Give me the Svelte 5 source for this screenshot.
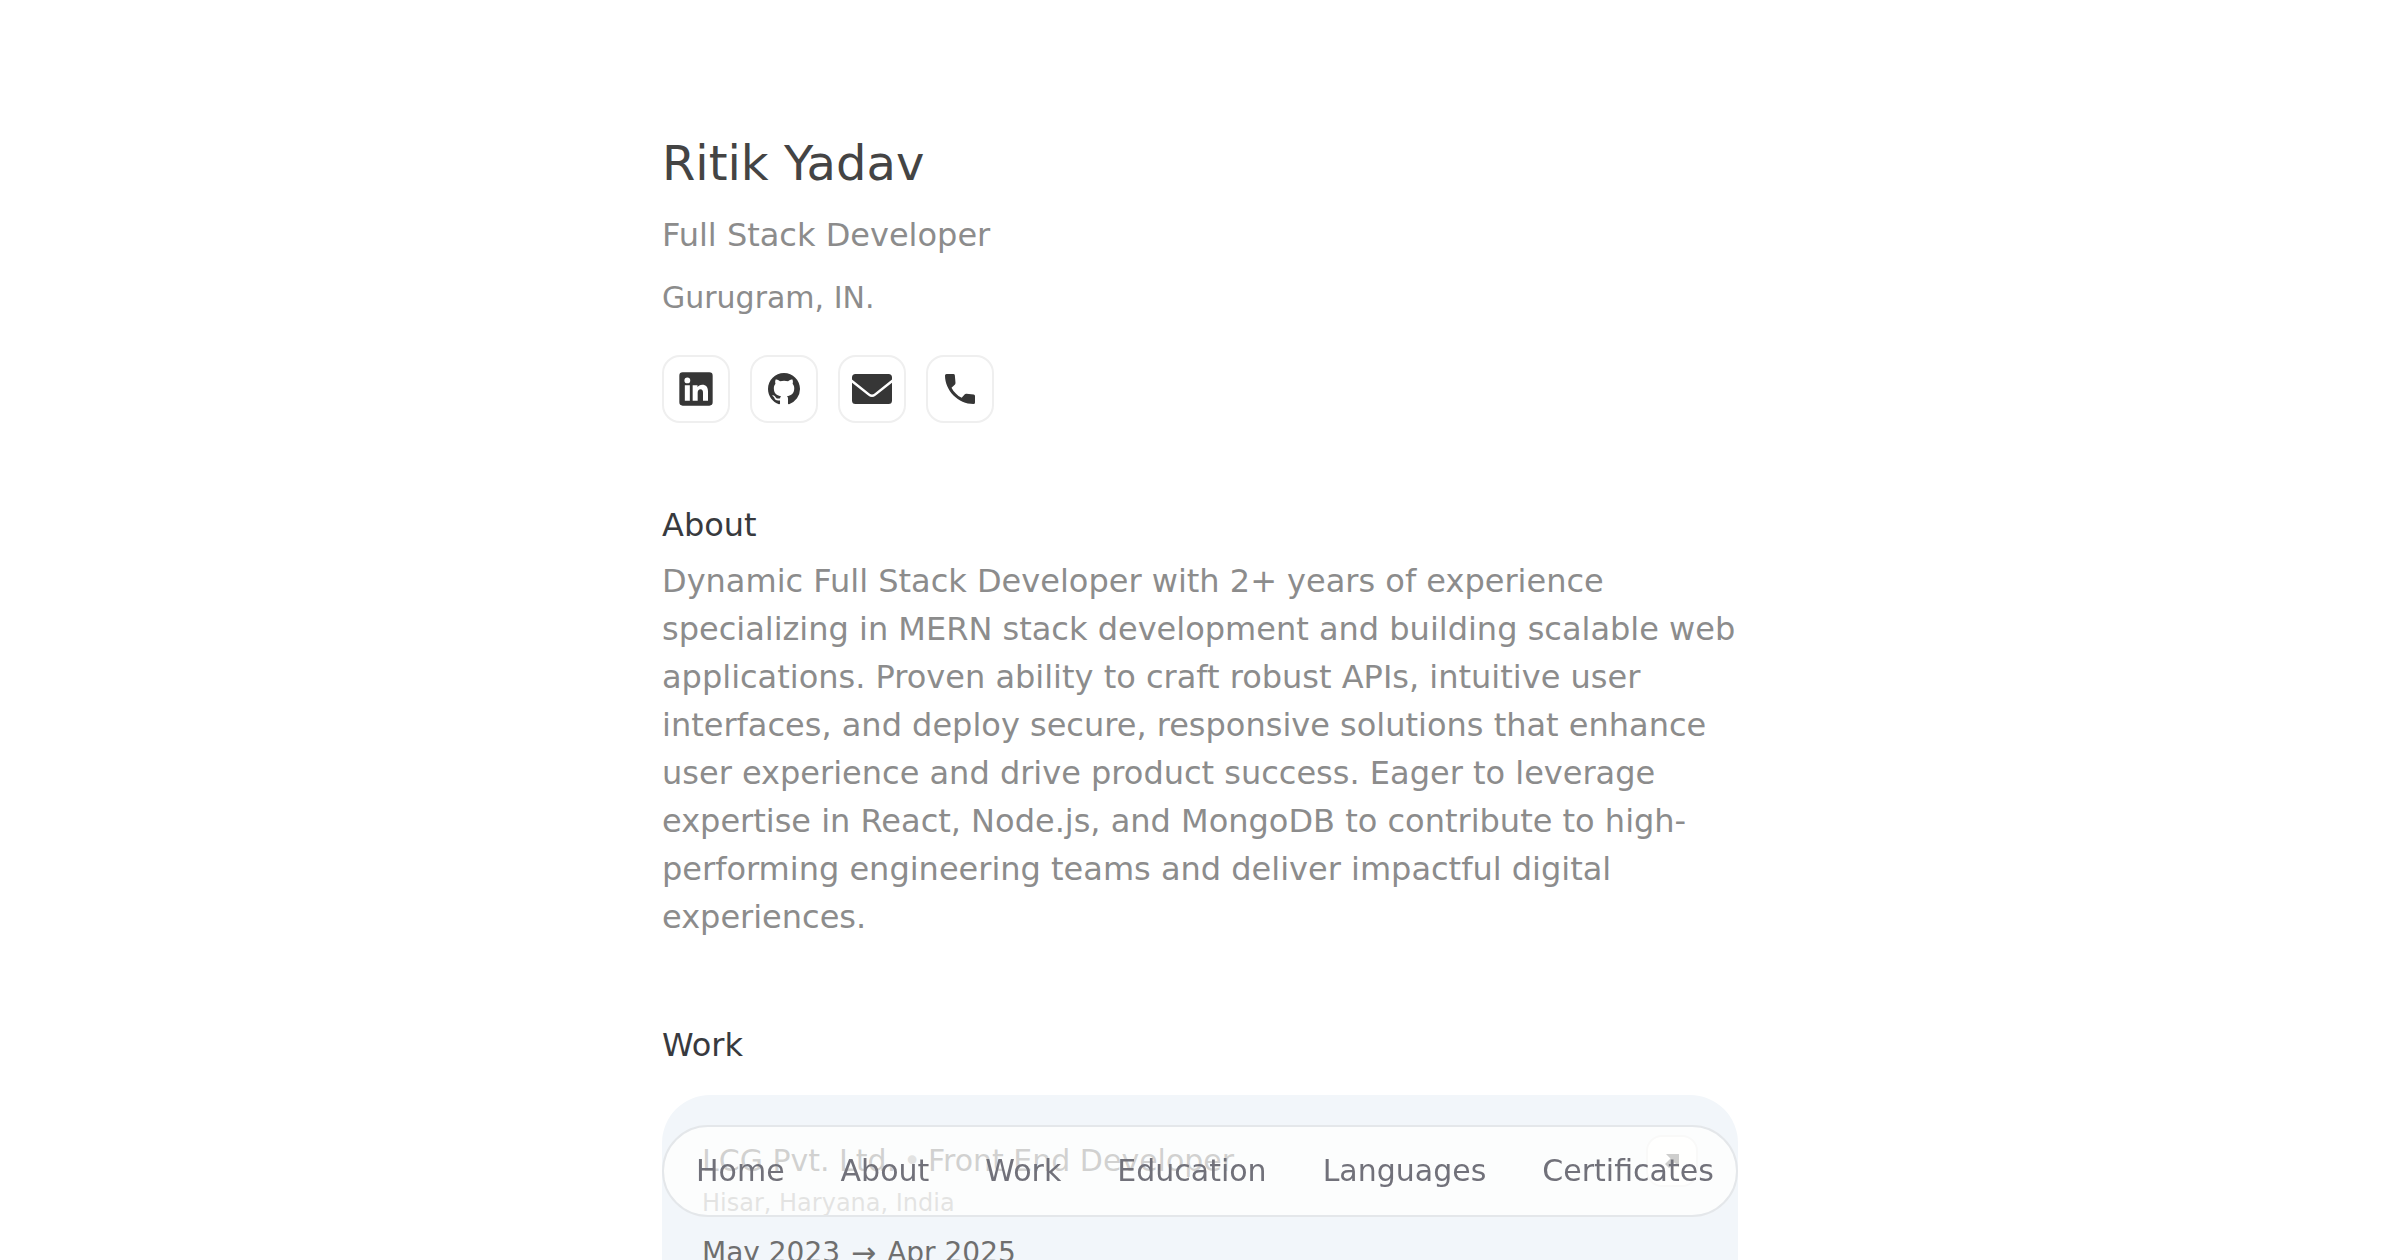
<script lang="ts">
    const socials = [
        {
            name: "LinkedIn",
            href: "#linkedin",
            size: 40,
            viewBox: "0 0 24 24",
            path: "M20 2H4a2 2 0 0 0-2 2v16a2 2 0 0 0 2 2h16a2 2 0 0 0 2-2V4a2 2 0 0 0-2-2zM8.300 19H5.300V9.700h3zM6.800 8.600a1.750 1.750 0 1 1 0-3.500 1.750 1.750 0 0 1 0 3.500zM19.200 19h-3v-4.700c0-1.300-.4-2.100-1.500-2.100s-1.700.8-1.700 2.100V19h-3V9.700h2.900v1.200c.5-.9 1.500-1.450 2.800-1.450 2.400 0 3.500 1.500 3.500 4.150z",
        },
        {
            name: "GitHub",
            href: "#github",
            size: 32,
            viewBox: "0 0 16 16",
            path: "M8 0C3.580 0 0 3.580 0 8c0 3.540 2.290 6.530 5.470 7.590.4.070.55-.17.55-.38 0-.19-.01-.82-.01-1.490-2.010.37-2.530-.49-2.690-.94-.09-.23-.48-.94-.82-1.130-.28-.15-.68-.52-.01-.53.63-.01 1.080.58 1.230.82.72 1.210 1.870.87 2.330.66.07-.52.28-.87.51-1.070-1.780-.2-3.640-.89-3.640-3.950 0-.87.31-1.590.82-2.150-.08-.2-.36-1.020.08-2.120 0 0 .67-.21 2.200.82.64-.18 1.320-.27 2-.27s1.360.09 2 .27c1.530-1.040 2.200-.82 2.200-.82.44 1.100.16 1.920.08 2.120.51.56.82 1.270.82 2.150 0 3.070-1.870 3.750-3.650 3.950.29.25.54.73.54 1.480 0 1.070-.01 1.930-.01 2.200 0 .21.15.46.55.38A8.010 8.010 0 0 0 16 8c0-4.420-3.580-8-8-8z",
        },
        {
            name: "Email",
            href: "#email",
            size: 40,
            viewBox: "0 0 40 40",
            path: "M3.500 5h33A3.500 3.500 0 0 1 40 8.500v2L22.500 24.500a4 4 0 0 1-5 0L0 10.500v-2A3.500 3.500 0 0 1 3.500 5zM0 13.700l16.200 12.800a6 6 0 0 0 7.600 0L40 13.700v17.800a3.500 3.500 0 0 1-3.500 3.500h-33A3.500 3.500 0 0 1 0 31.500z",
        },
        {
            name: "Phone",
            href: "#phone",
            size: 40,
            viewBox: "0 0 24 24",
            path: "M3.900 3H8a.9.900 0 0 1 .9.800l.4 4.500c0 .4-.1.700-.3 1l-2.100 1.900c1.500 2.700 3.400 4.600 6.100 6.100l1.900-2.100c.3-.3.6-.4 1-.3l4.300.4a.9.900 0 0 1 .8.900v3.900a.9.900 0 0 1-.9.900C11 21 3 13 3 3.900a.9.900 0 0 1 .9-.9z",
        },
    ];

    const links = ["Home", "About", "Work", "Education", "Languages", "Certificates"];
</script>

<main>
    <header id="home">
        <h1>Ritik Yadav</h1>
        <p class="role">Full Stack Developer</p>
        <p class="place">Gurugram, IN.</p>
        <div class="socials">
            {#each socials as social}
                <a class="social" href={social.href} aria-label={social.name}>
                    <svg width={social.size} height={social.size} viewBox={social.viewBox}>
                        <path d={social.path} />
                    </svg>
                </a>
            {/each}
        </div>
    </header>

    <section id="about">
        <h2>About</h2>
        <p class="summary">
            Dynamic Full Stack Developer with 2+ years of experience specializing in MERN stack
            development and building scalable web applications. Proven ability to craft robust
            APIs, intuitive user interfaces, and deploy secure, responsive solutions that enhance
            user experience and drive product success. Eager to leverage expertise in React,
            Node.js, and MongoDB to contribute to high-performing engineering teams and deliver
            impactful digital experiences.
        </p>
    </section>

    <section id="work">
        <h2>Work</h2>
        <article class="card">
            <div class="card-head">
                <h3>
                    <span>LCG Pvt. Ltd.</span>
                    <span class="dot">•</span>
                    <span>Front End Developer</span>
                </h3>
                <a class="open" href="#lcg" aria-label="Open LCG Pvt. Ltd.">
                    <svg width="14" height="14" viewBox="0 0 14 14">
                        <path d="M1 0h13v13l-4.500-4.500L4 14 0 10l5.500-5.500z" />
                    </svg>
                </a>
            </div>
            <p class="location">Hisar, Haryana, India</p>
            <p class="dates">
                <span>May 2023</span>
                <span class="arrow">→</span>
                <span>Apr 2025</span>
            </p>
        </article>
    </section>
</main>

<nav>
    {#each links as link}
        <a href="#{link.toLowerCase()}">{link}</a>
    {/each}
</nav>

<style>
    :global(body) {
        background: #fff;
        font-family: "DejaVu Sans", sans-serif;
    }

    :global(html) {
        scrollbar-width: none;
    }

    main {
        box-sizing: border-box;
        max-width: 1076px;
        margin: 0 auto;
        padding: 127px 0;
    }

    h1,
    h2,
    h3,
    p {
        margin: 0;
        font-weight: 400;
    }

    a {
        color: inherit;
        text-decoration: none;
    }

    svg {
        fill: currentColor;
    }

    h1 {
        color: #444;
        font-size: 48px;
        line-height: 72px;
    }

    .role {
        margin-top: 12px;
        color: #8c8c8c;
        font-size: 32px;
        line-height: 48px;
    }

    .place {
        margin-top: 16px;
        color: #8c8c8c;
        font-size: 30px;
        line-height: 46px;
    }

    .socials {
        display: flex;
        gap: 20px;
        margin-top: 34px;
    }

    .social {
        display: grid;
        place-items: center;
        box-sizing: border-box;
        width: 68px;
        height: 68px;
        border: 2px solid #efefef;
        border-radius: 18px;
        color: #363636;
    }

    section {
        margin-top: 78px;
    }

    h2 {
        color: #383a3e;
        font-size: 32px;
        line-height: 48px;
    }

    .summary {
        margin-top: 8px;
        color: #8c8c8c;
        font-size: 32px;
        line-height: 48px;
    }

    #work {
        margin-top: 80px;
    }

    .card {
        margin-top: 26px;
        padding: 40px;
        border-radius: 48px;
        background: #f2f6fa;
    }

    .card-head {
        display: flex;
        align-items: center;
        justify-content: space-between;
    }

    h3 {
        display: flex;
        gap: 7px;
        color: #404040;
        font-size: 30px;
        line-height: 44px;
    }

    .dot {
        color: #8c8c8c;
    }

    .open {
        display: grid;
        place-items: center;
        box-sizing: border-box;
        width: 52px;
        height: 52px;
        border: 2px solid #e4e4e7;
        border-radius: 16px;
        background: #fff;
        color: #333;
    }

    .location {
        color: #8c8c8c;
        font-size: 24px;
        line-height: 32px;
    }

    .dates {
        display: flex;
        gap: 11px;
        margin-top: 12px;
        color: #6f6f6f;
        font-size: 28px;
        line-height: 44px;
    }

    .arrow {
        font-size: 30px;
    }

    nav {
        position: fixed;
        bottom: 43px;
        left: 50%;
        display: flex;
        gap: 56px;
        align-items: center;
        box-sizing: border-box;
        width: 1076px;
        max-width: 100%;
        height: 92px;
        padding: 0 32px;
        border: 2px solid #e4e7ea;
        border-radius: 46px;
        background: rgba(255, 255, 254, 0.76);
        color: #71717a;
        font-size: 30px;
        line-height: 44px;
        transform: translateX(-50%);
    }
</style>
